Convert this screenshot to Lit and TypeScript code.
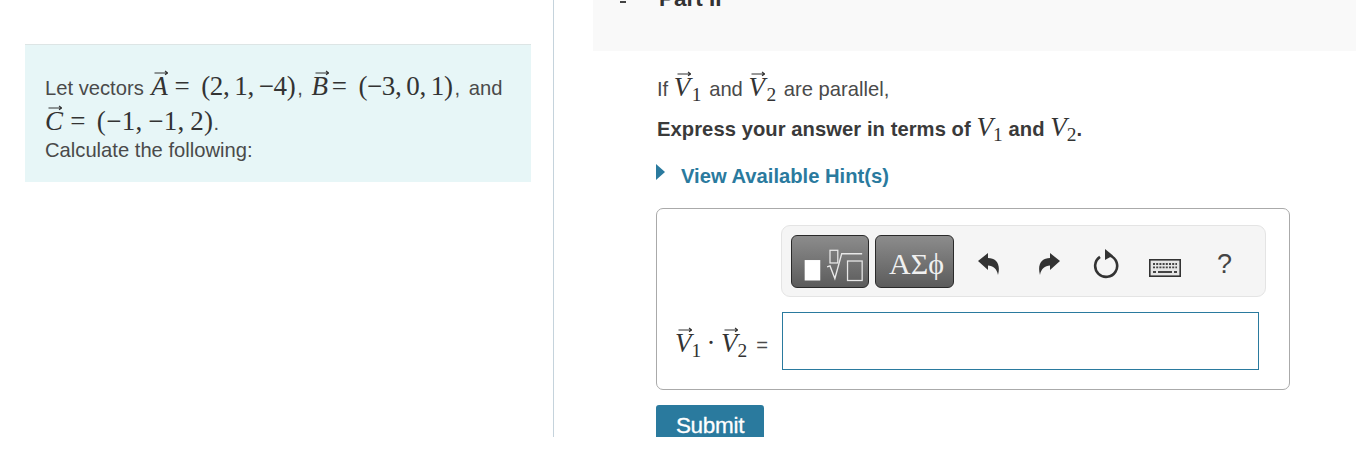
import { LitElement, html, css, svg } from "lit";
import { customElement } from "lit/decorators.js";

const arrow = svg`<path d="M0.5 3H13.5M11 1L13.7 3L11 4.8" fill="none" stroke="#333" stroke-width="1.1"/>`;

function vec(letter: string, sub = "") {
  return html`<span class="vec"><i>${letter}</i><svg class="arrow" viewBox="0 0 14 6" width="14" height="6">${arrow}</svg></span>${sub
    ? html`<sub class="sb">${sub}</sub>`
    : ""}`;
}

@customElement("app-root")
export class AppRoot extends LitElement {
  static styles = css`
    :host {
      display: block;
      width: 1368px;
      height: 457px;
      overflow: hidden;
      background: #fff;
      font-family: "Liberation Sans", Arial, sans-serif;
      color: #4a4a4a;
    }
    .page {
      display: flex;
      height: 437px;
      overflow: hidden;
    }
    .left {
      width: 554px;
      box-sizing: border-box;
      flex: none;
      border-right: 1px solid #c5d3dc;
      padding: 44px 22px 0 25px;
    }
    .intro {
      height: 138px;
      box-sizing: border-box;
      background: #e7f6f7;
      border-top: 1px solid #dde5e5;
      padding: 25px 20px 0 20px;
      font-size: 20.2px;
    }
    .l1 { height: 36px; line-height: 36px; }
    .l2 { height: 34px; line-height: 34px; }
    .l3 { height: 20px; line-height: 20px; }
    .m {
      font-family: "Liberation Serif", "Times New Roman", serif;
      font-size: 27px;
      color: #333;
      line-height: 1;
    }
    .l1 .m { letter-spacing: -0.4px; }
    .l2 .m { letter-spacing: 0.3px; }
    .first { margin-left: 2px; }
    .eq { margin: 0 12px 0 7px; }
    .l2 .eq { margin-right: 11px; }
    .eq.tight { margin: 0 12px 0 4px; }
    .sep { margin: 0 3px 0 2px; }
    .vec {
      position: relative;
      display: inline-block;
      line-height: 1;
    }
    .arrow {
      position: absolute;
      left: 3px;
      top: -3px;
    }
    .sb {
      font-size: 0.72em;
      font-style: normal;
      vertical-align: -5px;
      line-height: 0;
    }
    .line .sb {
      margin: 0 2px 0 1.5px;
    }
    .right {
      flex: none;
      width: 814px;
      box-sizing: border-box;
      padding-left: 39px;
    }
    .head {
      width: 763px;
      height: 51px;
      background: #f9f9f9;
      display: flex;
      align-items: flex-start;
      gap: 33px;
      padding-left: 27px;
      box-sizing: border-box;
      overflow: hidden;
    }
    .head .caret {
      width: 6px;
      height: 3px;
      flex: none;
      border-bottom: 2px solid #444;
      box-sizing: border-box;
    }
    .head .title {
      font-weight: 700;
      font-size: 22.5px;
      line-height: 26px;
      color: #333;
      margin-top: -14px;
    }
    .body {
      padding: 16px 0 0 64px;
      font-size: 20.2px;
    }
    .line {
      height: 42px;
      line-height: 44px;
    }
    .express {
      font-weight: 700;
      color: #3a3a3a;
      height: 40px;
      line-height: 40px;
      letter-spacing: 0.06px;
    }
    .express .m {
      font-weight: 400;
    }
    .hint {
      display: flex;
      align-items: center;
      gap: 16px;
      height: 54px;
      margin-left: -1px;
      color: #2a7a9e;
      font-weight: 700;
    }
    .tri {
      width: 0;
      height: 0;
      border-left: 9px solid #2a7a9e;
      border-top: 8.5px solid transparent;
      border-bottom: 8.5px solid transparent;
      margin-top: -8px;
    }
    .box {
      margin: 5px 0 0 -1px;
      width: 634px;
      height: 182px;
      box-sizing: border-box;
      border: 1px solid #aaa;
      border-radius: 7px;
      padding: 16px 24px 0 18px;
    }
    .toolbar {
      margin-left: 106px;
      width: 485px;
      height: 72px;
      box-sizing: border-box;
      background: #f5f5f5;
      border: 1px solid #e4e4e4;
      border-radius: 9px;
      display: flex;
      align-items: center;
      padding: 0 0 0 9px;
    }
    .tb {
      height: 53px;
      box-sizing: border-box;
      border: 1px solid #2a2a2a;
      border-radius: 6px;
      background: linear-gradient(#8c8c8c, #5c5c5c);
      color: #f0f0f0;
      display: flex;
      align-items: center;
      justify-content: center;
      flex: none;
    }
    .tb.a {
      width: 78px;
      margin-right: 6px;
    }
    .tb.b {
      width: 79px;
      font-family: "Liberation Serif", serif;
      font-size: 30px;
      padding: 6px 0 0 4px;
      margin-right: 23px;
    }
    .ic {
      flex: none;
      display: block;
      margin-top: 6px;
    }
    .ic.u { margin-right: 36px; }
    .ic.r { margin-right: 32px; }
    .ic.c { margin-right: 30px; margin-top: 5px; }
    .ic.k { margin-right: 36px; margin-top: 13px; }
    .q {
      font-size: 27px;
      color: #444;
      margin-top: 6px;
    }
    .row {
      display: flex;
      align-items: center;
      margin-top: 15px;
    }
    .label {
      width: 107px;
      flex: none;
      white-space: nowrap;
      font-size: 20.2px;
      padding-top: 4px;
      box-sizing: border-box;
    }
    .lbl-eq { margin-left: 9px; }
    .input {
      width: 477px;
      height: 58px;
      box-sizing: border-box;
      border: 1.5px solid #2a7a9e;
      background: #fff;
      flex: none;
    }
    .submit {
      margin: 15px 0 0 -1px;
      width: 108px;
      height: 38px;
      box-sizing: border-box;
      background: #2a7a9e;
      color: #fff;
      border-radius: 3px 3px 0 0;
      font-size: 22.5px;
      line-height: 42px;
      text-align: center;
      letter-spacing: -0.3px;
      -webkit-text-stroke: 0.3px #fff;
    }
  `;

  render() {
    return html`
      <div class="page">
        <div class="left">
          <div class="intro">
            <div class="l1">Let vectors <span class="m first">${vec("A")}<span class="eq">=</span>(2,\u20091,\u2009−4)</span><span class="sep">,</span> <span class="m">${vec("B")}<span class="eq tight">=</span>(−3,\u20090,\u20091)</span><span class="sep">,</span> and</div>
            <div class="l2"><span class="m">${vec("C")}<span class="eq">=</span>(−1,\u2009−1,\u20092)</span>.</div>
            <div class="l3">Calculate the following:</div>
          </div>
        </div>
        <div class="right">
          <div class="head">
            <div class="caret"></div>
            <div class="title">Part II</div>
          </div>
          <div class="body">
            <div class="line">If <span class="m">${vec("V", "1")}</span> and <span class="m">${vec("V", "2")}</span> are parallel,</div>
            <div class="express">Express your answer in terms of <span class="m"><i>V</i><sub class="sb">1</sub></span> and <span class="m"><i>V</i><sub class="sb">2</sub></span>.</div>
            <div class="hint"><span class="tri"></span><span>View Available Hint(s)</span></div>
            <div class="box">
              <div class="toolbar">
                <div class="tb a">
                  <svg viewBox="0 0 78 53" width="78" height="53">
                    <rect x="13" y="25" width="16" height="21" fill="#fff" />
                    <path d="M36 32L39 31L44 44L51 18.5H72" fill="none" stroke="#e8e8e8" stroke-width="1.4" />
                    <rect x="39" y="15" width="8" height="13" fill="none" stroke="#e8e8e8" stroke-width="1.3" />
                    <rect x="57" y="26" width="15" height="20" fill="none" stroke="#e8e8e8" stroke-width="1.3" />
                  </svg>
                </div>
                <div class="tb b">ΑΣϕ</div>
                <svg class="ic u" viewBox="0 0 24 24" width="24" height="24">
                  <path d="M1 9L11 1V6C19 6 24 12 21 23C20 17 16 13.5 11 13.5V18Z" fill="#333" />
                </svg>
                <svg class="ic r" viewBox="0 0 24 24" width="24" height="24">
                  <path d="M23 9L13 1V6C5 6 0 12 3 23C4 17 8 13.5 13 13.5V18Z" fill="#333" />
                </svg>
                <svg class="ic c" viewBox="0 0 26 30" width="26" height="30">
                  <path d="M17 6.6A11 11 0 1 1 7 7.8" fill="none" stroke="#333" stroke-width="2.6" />
                  <path d="M12 0L20 6.5L12 11Z" fill="#333" />
                </svg>
                <svg class="ic k" viewBox="0 0 32 18" width="32" height="18">
                  <rect x="0.8" y="0.8" width="30.4" height="16.4" fill="#e6e6e6" stroke="#333" stroke-width="1.6" />
                  <path d="M4 5H28M4 8.3H28" stroke="#444" stroke-width="1.8" stroke-dasharray="2 1.2" />
                  <path d="M4 13H7M9 13H23M25 13H28" stroke="#444" stroke-width="1.8" />
                </svg>
                <span class="q">?</span>
              </div>
              <div class="row">
                <div class="label"><span class="m">${vec("V", "1")}\u2009·\u2009${vec("V", "2")}</span><span class="lbl-eq">=</span></div>
                <div class="input"></div>
              </div>
            </div>
            <div class="submit">Submit</div>
          </div>
        </div>
      </div>
    `;
  }
}
